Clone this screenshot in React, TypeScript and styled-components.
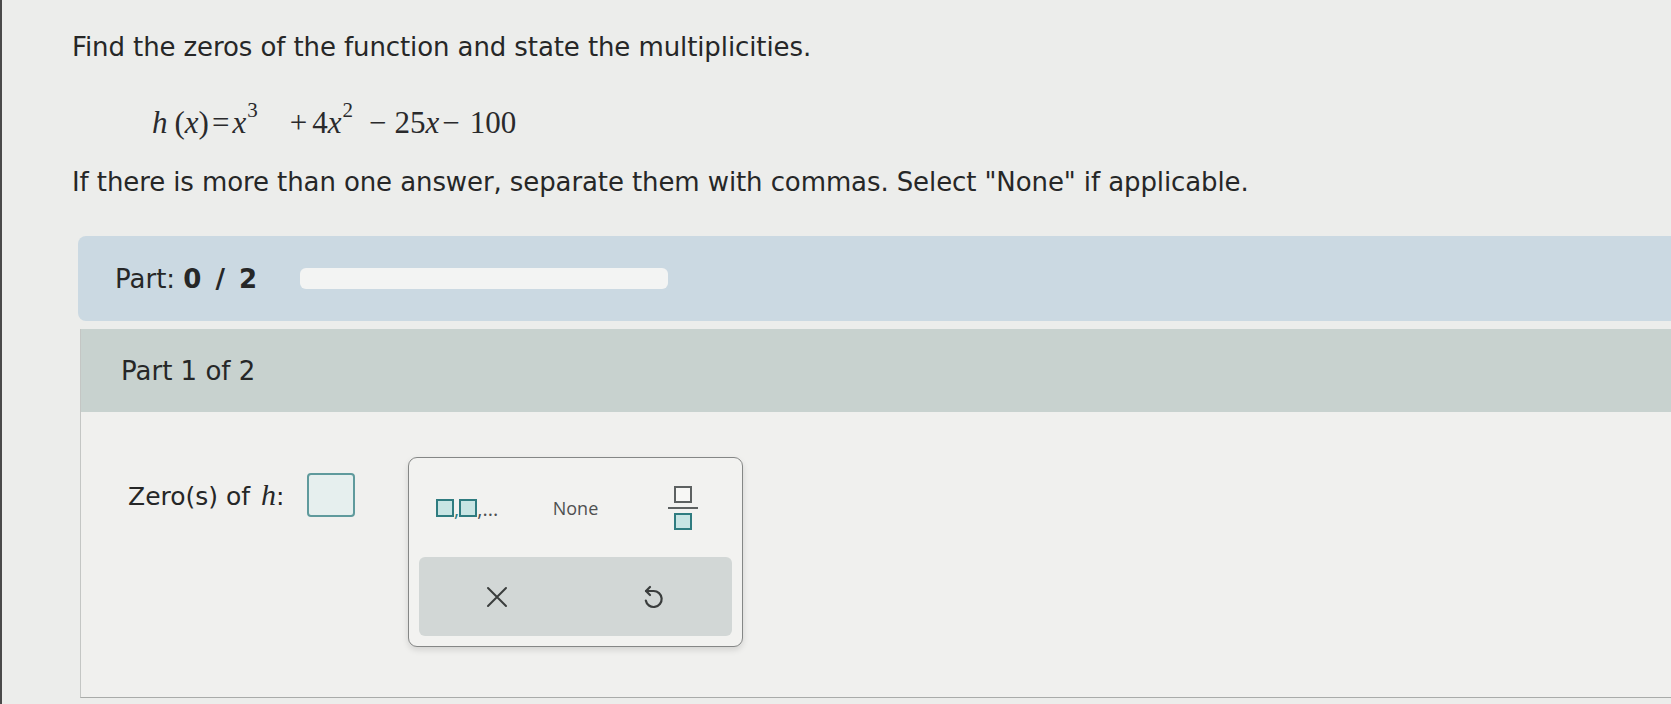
import React from "react";
import styled, { createGlobalStyle } from "styled-components";

const GlobalStyle = createGlobalStyle`
  html, body {
    margin: 0;
    padding: 0;
    background: #ecedeb;
  }
  body {
    font-family: "DejaVu Sans", Verdana, sans-serif;
    color: #262727;
  }
`;

const Page = styled.div`
  width: 1671px;
  height: 704px;
  overflow: hidden;
  border-left: 2px solid #4a4a4a;
  box-sizing: border-box;
  display: flex;
  flex-direction: column;
`;

const Intro = styled.div`
  display: flex;
  flex-direction: column;
  padding: 31px 0 0 70px;
`;

const Line = styled.p`
  margin: 0;
  font-size: 26px;
  line-height: 32px;
  letter-spacing: -0.1px;
  white-space: nowrap;
`;

const Equation = styled.div`
  margin: 43px 0 26px 80px;
  font-family: "Liberation Serif", "Times New Roman", serif;
  font-size: 31px;
  line-height: 34px;
  color: #2a2a2c;
  white-space: nowrap;
`;

const Var = styled.i`
  font-style: italic;
`;

const Op = styled.span<{ $l?: number; $r?: number }>`
  margin-left: ${(p) => p.$l ?? 4}px;
  margin-right: ${(p) => p.$r ?? 4}px;
`;

const Sup = styled.sup<{ $gap: number }>`
  font-size: 21px;
  line-height: 0;
  position: relative;
  top: -5px;
  margin-left: 1px;
  margin-right: ${(p) => p.$gap}px;
`;

const PartBar = styled.div`
  margin: 38px 0 0 76px;
  height: 85px;
  background: #cbd9e2;
  border-radius: 8px 0 0 8px;
  display: flex;
  align-items: center;
  padding-left: 37px;
`;

const PartLabel = styled.span`
  width: 185px;
  font-size: 26px;
  white-space: nowrap;
  b {
    font-weight: 700;
    word-spacing: 5px;
  }
`;

const Progress = styled.div`
  width: 368px;
  height: 21px;
  border-radius: 6px;
  background: #f3f4f3;
`;

const Card = styled.div`
  margin: 8px 0 6px 78px;
  flex: 1;
  display: flex;
  flex-direction: column;
  border-left: 1px solid #c4c6c4;
  border-bottom: 1.5px solid #a9aba9;
  background: #f0f0ee;
`;

const CardHeader = styled.div`
  height: 83px;
  background: #c8d2cf;
  display: flex;
  align-items: center;
  padding-left: 40px;
  font-size: 26px;
`;

const CardBody = styled.div`
  display: flex;
  align-items: flex-start;
  padding: 45px 0 0 47px;
`;

const AnswerRow = styled.div`
  display: flex;
  align-items: center;
  gap: 22px;
  margin-top: 16px;
  width: 280px;
`;

const ZeroLabel = styled.span`
  font-size: 25px;
  white-space: nowrap;
  i {
    font-family: "Liberation Serif", serif;
    font-style: italic;
    font-size: 30px;
    margin-left: 3px;
  }
`;

const InputBox = styled.div`
  flex: none;
  width: 44px;
  height: 40px;
  border: 2px solid #5f9a9c;
  border-radius: 4px;
  background: #e6efee;
`;

const Keypad = styled.div`
  width: 335px;
  height: 190px;
  box-sizing: border-box;
  border: 1.5px solid #858786;
  border-radius: 9px;
  background: #f2f2f0;
  box-shadow: 0 3px 6px rgba(0, 0, 0, 0.12);
  padding: 10px;
  display: flex;
  flex-direction: column;
`;

const KeyRow = styled.div`
  height: 89px;
  padding-bottom: 10px;
  box-sizing: border-box;
  display: grid;
  grid-template-columns: 1fr 1fr 1fr;
  align-items: center;
  justify-items: center;
`;

const KeyText = styled.span`
  font-family: "Open Sans", sans-serif;
  font-size: 18px;
  color: #4e5050;
`;

const ActionPanel = styled.div`
  flex: 1;
  background: #d2d7d6;
  border-radius: 6px;
  display: grid;
  grid-template-columns: 1fr 1fr;
  align-items: center;
  justify-items: center;
`;

const Slot = styled.span<{ $tone?: "teal" | "plain" }>`
  flex: none;
  display: inline-block;
  width: 18px;
  height: 18px;
  box-sizing: border-box;
  border: 2px solid ${(p) => (p.$tone === "plain" ? "#5d6161" : "#2f7c80")};
  background: ${(p) => (p.$tone === "plain" ? "#f7f7f5" : "#c8e5e4")};
`;

const ListKey = styled.div`
  display: flex;
  align-items: flex-end;
  margin-right: 8px;
  font-family: "Open Sans", sans-serif;
  font-size: 20px;
  line-height: 16px;
  color: #2f7c80;
  span {
    color: #4e5050;
  }
`;

const FractionKey = styled.div`
  display: flex;
  flex-direction: column;
  align-items: center;
  gap: 4px;
  margin-left: 6px;
  ${Slot} {
    width: 18px;
    height: 17px;
  }
`;

const FractionBar = styled.div`
  width: 30px;
  height: 2px;
  background: #5d6161;
`;

export default function App() {
  return (
    <Page>
      <GlobalStyle />
      <Intro>
        <Line>Find the zeros of the function and state the multiplicities.</Line>
        <Equation>
          <Var>h</Var>
          <Op $l={7} $r={0}>(</Op>
          <Var>x</Var>)<Op $l={3} $r={3}>=</Op>
          <Var>x</Var>
          <Sup $gap={32}>3</Sup>
          <Op $l={0} $r={5}>+</Op>4<Var>x</Var>
          <Sup $gap={16}>2</Sup>
          <Op $l={0} $r={8}>−</Op>25<Var>x</Var>
          <Op $l={3} $r={10}>−</Op>100
        </Equation>
        <Line>
          If there is more than one answer, separate them with commas. Select "None" if applicable.
        </Line>
      </Intro>
      <PartBar>
        <PartLabel>
          Part: <b>0 / 2</b>
        </PartLabel>
        <Progress />
      </PartBar>
      <Card>
        <CardHeader>Part 1 of 2</CardHeader>
        <CardBody>
          <AnswerRow>
            <ZeroLabel>
              Zero(s) of <i>h</i>:
            </ZeroLabel>
            <InputBox />
          </AnswerRow>
          <Keypad>
            <KeyRow>
              <ListKey>
                <Slot />,<Slot />
                <span>,...</span>
              </ListKey>
              <KeyText>None</KeyText>
              <FractionKey>
                <Slot $tone="plain" />
                <FractionBar />
                <Slot />
              </FractionKey>
            </KeyRow>
            <ActionPanel>
              <svg width="24" height="24" viewBox="0 0 24 24" fill="none" stroke="#3a3d3d" strokeWidth="2" strokeLinecap="round">
                <path d="M3 3 L21 21 M21 3 L3 21" />
              </svg>
              <svg width="25" height="27" viewBox="0 0 25 27" fill="none" stroke="#3a3d3d" strokeWidth="2.2" strokeLinecap="round" strokeLinejoin="round">
                <path d="M5 8 L12.5 8 A8 8 0 1 1 4.8 17.5" />
                <path d="M9 4 L5 8 L9 12" />
              </svg>
            </ActionPanel>
          </Keypad>
        </CardBody>
      </Card>
    </Page>
  );
}
